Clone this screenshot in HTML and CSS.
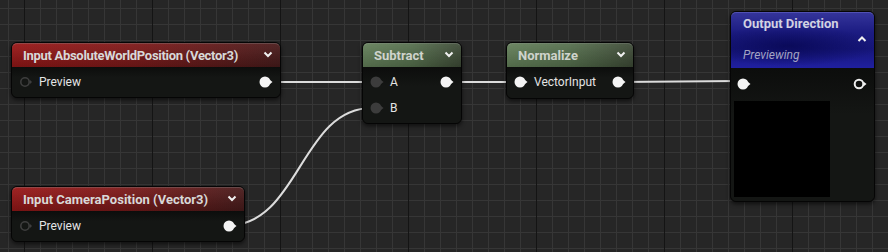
FILE: index.html
```html
<!DOCTYPE html>
<html lang="en">

<head>
    <meta charset="utf-8" />
    <title>Material Graph</title>
    <link rel="stylesheet" href="styles.css">
</head>

<body>
    <div class="graph">
        <svg class="wires" width="888" height="252" viewBox="0 0 888 252">
            <path d="M266 82 L372 82" />
            <path d="M226 226 C 300 226, 300 108, 372 108" />
            <path d="M447 82 L515 82" />
            <path d="M619 82 L738 81" />
        </svg>

        <!-- Input AbsoluteWorldPosition -->
        <div class="node node-world">
            <div class="node-header header-red">
                <span class="title title-long">Input AbsoluteWorldPosition (Vector3)</span>
                <svg class="chevron" width="10" height="7" viewBox="0 0 10 7"><path d="M1.5 1.5 L5 5 L8.5 1.5" /></svg>
            </div>
            <div class="node-body">
                <div class="pin-row">
                    <span class="pin-in">
                        <svg width="14" height="12" viewBox="0 0 14 12"><circle cx="6" cy="6" r="4.2" class="ring-dim" /><path d="M11 4 L13 6 L11 8 Z" class="tri-dim" /></svg>
                        <span class="pin-label">Preview</span>
                    </span>
                    <span class="pin-out">
                        <svg width="14" height="12" viewBox="0 0 14 12"><circle cx="6" cy="6" r="5.5" class="dot" /><path d="M11 4 L13.5 6 L11 8 Z" class="dot" /></svg>
                    </span>
                </div>
            </div>
        </div>

        <!-- Input CameraPosition -->
        <div class="node node-camera">
            <div class="node-header header-red">
                <span class="title">Input CameraPosition (Vector3)</span>
                <svg class="chevron" width="10" height="7" viewBox="0 0 10 7"><path d="M1.5 1.5 L5 5 L8.5 1.5" /></svg>
            </div>
            <div class="node-body">
                <div class="pin-row">
                    <span class="pin-in">
                        <svg width="14" height="12" viewBox="0 0 14 12"><circle cx="6" cy="6" r="4.2" class="ring-dim" /><path d="M11 4 L13 6 L11 8 Z" class="tri-dim" /></svg>
                        <span class="pin-label">Preview</span>
                    </span>
                    <span class="pin-out">
                        <svg width="14" height="12" viewBox="0 0 14 12"><circle cx="6" cy="6" r="5.5" class="dot" /><path d="M11 4 L13.5 6 L11 8 Z" class="dot" /></svg>
                    </span>
                </div>
            </div>
        </div>

        <!-- Subtract -->
        <div class="node node-subtract">
            <div class="node-header header-green">
                <span class="title">Subtract</span>
                <svg class="chevron" width="10" height="7" viewBox="0 0 10 7"><path d="M1.5 1.5 L5 5 L8.5 1.5" /></svg>
            </div>
            <div class="node-body">
                <div class="pin-row">
                    <span class="pin-in">
                        <svg width="14" height="12" viewBox="0 0 14 12"><circle cx="6" cy="6" r="5.5" class="dark-dot" /><path d="M11 4 L13.5 6 L11 8 Z" class="dark-dot" /></svg>
                        <span class="pin-label">A</span>
                    </span>
                    <span class="pin-out">
                        <svg width="14" height="12" viewBox="0 0 14 12"><circle cx="6" cy="6" r="5.5" class="dot" /><path d="M11 4 L13.5 6 L11 8 Z" class="dot" /></svg>
                    </span>
                </div>
                <div class="pin-row">
                    <span class="pin-in">
                        <svg width="14" height="12" viewBox="0 0 14 12"><circle cx="6" cy="6" r="5.5" class="dark-dot" /><path d="M11 4 L13.5 6 L11 8 Z" class="dark-dot" /></svg>
                        <span class="pin-label">B</span>
                    </span>
                </div>
            </div>
        </div>

        <!-- Normalize -->
        <div class="node node-normalize">
            <div class="node-header header-green">
                <span class="title">Normalize</span>
                <svg class="chevron" width="10" height="7" viewBox="0 0 10 7"><path d="M1.5 1.5 L5 5 L8.5 1.5" /></svg>
            </div>
            <div class="node-body">
                <div class="pin-row">
                    <span class="pin-in">
                        <svg width="14" height="12" viewBox="0 0 14 12"><circle cx="6" cy="6" r="5.5" class="dot" /><path d="M11 4 L13.5 6 L11 8 Z" class="dot" /></svg>
                        <span class="pin-label">VectorInput</span>
                    </span>
                    <span class="pin-out">
                        <svg width="14" height="12" viewBox="0 0 14 12"><circle cx="6" cy="6" r="5.5" class="dot" /><path d="M11 4 L13.5 6 L11 8 Z" class="dot" /></svg>
                    </span>
                </div>
            </div>
        </div>

        <!-- Output Direction -->
        <div class="node node-output">
            <div class="node-header header-blue">
                <span class="title">Output Direction</span>
                <svg class="chevron-up" width="10" height="7" viewBox="0 0 10 7"><path d="M1.5 5 L5 1.5 L8.5 5" /></svg>
                <span class="subtitle">Previewing</span>
            </div>
            <div class="node-body">
                <div class="pin-row">
                    <span class="pin-in">
                        <svg width="14" height="12" viewBox="0 0 14 12"><circle cx="6" cy="6" r="5.5" class="dot" /><path d="M11 4 L13.5 6 L11 8 Z" class="dot" /></svg>
                    </span>
                    <span class="pin-out">
                        <svg width="14" height="12" viewBox="0 0 14 12"><circle cx="6" cy="6" r="4.3" class="ring" /><path d="M11 4 L13.5 6 L11 8 Z" class="dot" /></svg>
                    </span>
                </div>
                <div class="preview"></div>
            </div>
        </div>
    </div>
</body>

</html>
```

FILE: styles.css
```css
body {
    margin: 0;
    background: #262626;
    font-family: Roboto, "Noto Sans", sans-serif;
    overflow: hidden;
}

.graph {
    position: relative;
    width: 888px;
    height: 252px;
    background-color: #262626;
    background-image:
        linear-gradient(to right, #141414 1px, transparent 1px),
        linear-gradient(to right, #363636 1px, transparent 1px),
        linear-gradient(to bottom, #363636 1px, transparent 1px);
    background-size: 128px 100%, 16px 100%, 100% 16px;
    background-position: 24px 0, 8px 0, 0 8px;
}

.wires {
    position: absolute;
    left: 0;
    top: 0;
}

.wires path {
    fill: none;
    stroke: #dcdcdc;
    stroke-width: 2;
}

.node {
    position: absolute;
    display: flex;
    flex-direction: column;
    background: #131512;
    border: 1px solid #050505;
    border-radius: 6px;
    box-shadow: 0 2px 4px rgba(0, 0, 0, 0.6);
    color: #e2e2e2;
}

.node-world {
    left: 11px;
    top: 42px;
    width: 268px;
    height: 54px;
}

.node-camera {
    left: 11px;
    top: 186px;
    width: 232px;
    height: 54px;
}

.node-subtract {
    left: 362px;
    top: 42px;
    width: 98px;
    height: 80px;
}

.node-normalize {
    left: 506px;
    top: 42px;
    width: 126px;
    height: 55px;
}

.node-output {
    left: 730px;
    top: 11px;
    width: 143px;
    height: 189px;
}

.node-header {
    display: flex;
    align-items: center;
    justify-content: space-between;
    height: 23px;
    padding: 0 7px 0 11px;
    border-radius: 5px 5px 0 0;
    border-top: 1px solid rgba(255, 255, 255, 0.22);
}

.header-red {
    background:
        linear-gradient(to bottom, rgba(255, 255, 255, 0.05), rgba(0, 0, 0, 0.22)),
        linear-gradient(to right, #9a1818 0%, #801a1a 45%, #4a1c1c 100%);
}

.header-green {
    background:
        linear-gradient(to bottom, rgba(255, 255, 255, 0.08), rgba(0, 0, 0, 0.15)),
        linear-gradient(to right, #607c56 0%, #526c4a 50%, #3a4733 100%);
}

.header-blue {
    position: relative;
    height: 53px;
    flex-direction: column;
    align-items: flex-start;
    justify-content: flex-start;
    padding: 2px 8px 0 12px;
    background:
        radial-gradient(ellipse 90px 20px at 40% 60%, #0a0a5a 0%, rgba(10, 10, 90, 0) 100%),
        linear-gradient(to bottom, #34349a 0%, #1c1c82 35%, #16167a 65%, #2020a0 100%);
}

.title {
    font-size: 13px;
    font-weight: 700;
    color: #d8d8d8;
    white-space: nowrap;
}

.title-long {
    letter-spacing: -0.3px;
}

.header-green .title {
    color: #cfd3cc;
}

.header-blue .title {
    color: #d2d2e2;
    line-height: 18px;
}

.subtitle {
    margin-top: 15px;
    font-size: 12px;
    font-style: italic;
    color: #a4a4c4;
}

.chevron,
.chevron-up {
    display: block;
    fill: none;
    stroke: #f0f0f0;
    stroke-width: 2;
}

.chevron {
    margin-top: -2px;
}

.chevron-up {
    position: absolute;
    right: 7px;
    top: 23px;
}

.node-body {
    display: flex;
    flex-direction: column;
    padding: 8px 7px 0 7px;
    gap: 12px;
    background: linear-gradient(to bottom, #0c0d0c, #141614 35%);
    border-radius: 0 0 6px 6px;
    flex: 1;
}

.node-output .node-body {
    padding: 9px 7px 0 6px;
}

.pin-row {
    display: flex;
    align-items: center;
    justify-content: space-between;
    height: 14px;
}

.pin-in,
.pin-out {
    display: flex;
    align-items: center;
    gap: 6px;
}

.pin-in svg,
.pin-out svg {
    display: block;
}

.pin-label {
    font-size: 12px;
    color: #e4e4e4;
}

.dot {
    fill: #f4f4f4;
}

.dark-dot {
    fill: #3c3c3c;
}

.ring-dim {
    fill: none;
    stroke: #3e3e3e;
    stroke-width: 1.6;
}

.tri-dim {
    fill: #3e3e3e;
}

.ring {
    fill: none;
    stroke: #eeeeee;
    stroke-width: 2;
}

.preview {
    width: 96px;
    height: 96px;
    margin-left: -3px;
    margin-top: -2px;
    background: #000;
}
```
